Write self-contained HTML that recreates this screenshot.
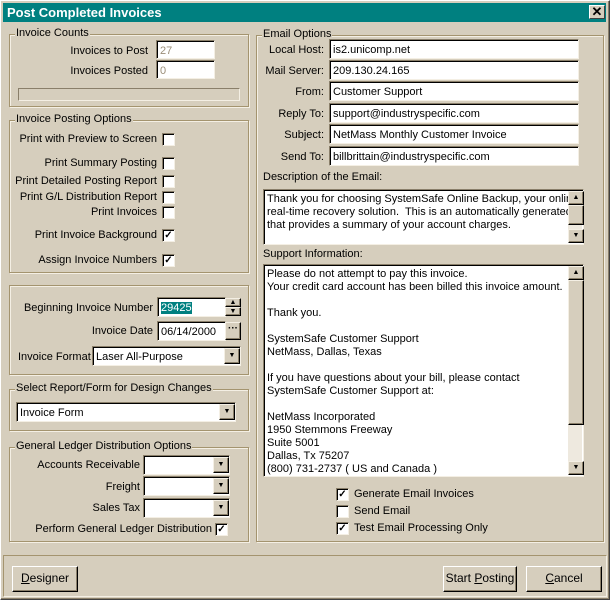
<!DOCTYPE html>
<html><head><style>
*{box-sizing:border-box;margin:0;padding:0}
body{width:610px;height:600px;background:#d6cebd;font-family:"Liberation Sans",sans-serif;font-size:11px;color:#000;position:relative;overflow:hidden}
.a{position:absolute;white-space:nowrap}
.win{position:absolute;left:0;top:0;width:610px;height:600px;border:1px solid #fff;border-right-color:#404040;border-bottom-color:#404040;box-shadow:inset -1px -1px 0 #8a7f6a}
.title{position:absolute;left:3px;top:3px;width:603px;height:19px;background:#008080;color:#fff;font-weight:bold;font-size:13px;padding:2px 4px}
.close{position:absolute;left:589px;top:5px;width:16px;height:14px;background:#d6cebd;border:1px solid;border-color:#fff #404040 #404040 #fff;font-size:13px;font-weight:bold;line-height:11px;text-align:center;color:#000}
.grp{position:absolute;border:1px solid #a4946f;box-shadow:inset 1px 1px 0 #f4efe4,1px 1px 0 #f4efe4}
.gl{position:absolute;background:#d6cebd;padding:0 1px;top:-8px;left:5px;white-space:nowrap}
.fld{position:absolute;background:#fff;border:1px solid;border-color:#8a7f6a #f4efe4 #f4efe4 #8a7f6a;box-shadow:inset 1px 1px 0 #000;padding:4px 0 0 3px;white-space:nowrap;overflow:hidden}
.r{text-align:right}
.cb{position:absolute;width:13px;height:13px;background:#fff;border:1px solid;border-color:#8a7f6a #f4efe4 #f4efe4 #8a7f6a;box-shadow:inset 1px 1px 0 #000;font-size:10px;line-height:11px;text-align:center;font-weight:bold}
.btn{position:absolute;background:#d6cebd;border:1px solid;border-color:#fff #000 #000 #fff;box-shadow:inset -1px -1px 0 #8a7f6a;text-align:center;font-size:12px}
.dd{position:absolute;width:16px;background:#d6cebd;border:1px solid;border-color:#f4efe4 #000 #000 #f4efe4;box-shadow:inset -1px -1px 0 #8a7f6a;font-size:7px;text-align:center}
.sb{position:absolute;width:14px;background:#eee9df}
</style></head><body>
<div class="win"></div>
<div class="title">Post Completed Invoices</div>
<div class="close">✕</div>

<div class="grp" style="left:9px;top:34px;width:240px;height:73px"><div class="gl">Invoice Counts</div></div>
<div class="a r" style="left:40px;top:45px;width:108px">Invoices to Post</div>
<div class="fld" style="left:156px;top:40px;width:59px;height:19px;color:#9a8e78">27</div>
<div class="a r" style="left:40px;top:65px;width:108px">Invoices Posted</div>
<div class="fld" style="left:156px;top:60px;width:59px;height:19px;color:#9a8e78">0</div>
<div class="a" style="left:18px;top:88px;width:222px;height:13px;border:1px solid;border-color:#8a7f6a #f4efe4 #f4efe4 #8a7f6a"></div>

<div class="grp" style="left:9px;top:120px;width:240px;height:153px"><div class="gl">Invoice Posting Options</div></div>
<div class="a r" style="left:10px;top:133px;width:147px">Print with Preview to Screen</div><div class="cb" style="left:162px;top:133px"></div>
<div class="a r" style="left:10px;top:157px;width:147px">Print Summary Posting</div><div class="cb" style="left:162px;top:157px"></div>
<div class="a r" style="left:10px;top:175px;width:147px">Print Detailed Posting Report</div><div class="cb" style="left:162px;top:175px"></div>
<div class="a r" style="left:10px;top:191px;width:147px">Print G/L Distribution Report</div><div class="cb" style="left:162px;top:191px"></div>
<div class="a r" style="left:10px;top:206px;width:147px">Print Invoices</div><div class="cb" style="left:162px;top:206px"></div>
<div class="a r" style="left:10px;top:229px;width:147px">Print Invoice Background</div><div class="cb" style="left:162px;top:229px">✓</div>
<div class="a r" style="left:10px;top:254px;width:147px">Assign Invoice Numbers</div><div class="cb" style="left:162px;top:254px">✓</div>

<div class="grp" style="left:9px;top:285px;width:240px;height:90px"></div>
<div class="a r" style="left:10px;top:302px;width:143px">Beginning Invoice Number</div>
<div class="fld" style="left:157px;top:297px;width:69px;height:20px"><span style="background:#008080;color:#fff">29425</span></div>
<div class="dd" style="left:225px;top:298px;height:9px;line-height:7px">▲</div>
<div class="dd" style="left:225px;top:307px;height:9px;line-height:7px">▼</div>
<div class="a r" style="left:10px;top:325px;width:143px">Invoice Date</div>
<div class="fld" style="left:157px;top:321px;width:69px;height:20px">06/14/2000</div>
<div class="dd" style="left:225px;top:322px;height:18px;font-size:10px;line-height:12px;font-weight:bold">···</div>
<div class="a" style="left:18px;top:351px">Invoice Format</div>
<div class="fld" style="left:92px;top:346px;width:149px;height:20px">Laser All-Purpose</div>
<div class="dd" style="left:224px;top:348px;height:16px;line-height:14px">▼</div>

<div class="grp" style="left:9px;top:389px;width:240px;height:42px"><div class="gl">Select Report/Form for Design Changes</div></div>
<div class="fld" style="left:16px;top:402px;width:220px;height:20px">Invoice Form</div>
<div class="dd" style="left:219px;top:404px;height:16px;line-height:14px">▼</div>

<div class="grp" style="left:9px;top:447px;width:240px;height:95px"><div class="gl">General Ledger Distribution Options</div></div>
<div class="a r" style="left:10px;top:459px;width:130px">Accounts Receivable</div>
<div class="fld" style="left:143px;top:455px;width:87px;height:20px"></div><div class="dd" style="left:213px;top:457px;height:16px;line-height:14px">▼</div>
<div class="a r" style="left:10px;top:481px;width:130px">Freight</div>
<div class="fld" style="left:143px;top:476px;width:87px;height:20px"></div><div class="dd" style="left:213px;top:478px;height:16px;line-height:14px">▼</div>
<div class="a r" style="left:10px;top:502px;width:130px">Sales Tax</div>
<div class="fld" style="left:143px;top:498px;width:87px;height:20px"></div><div class="dd" style="left:213px;top:500px;height:16px;line-height:14px">▼</div>
<div class="a r" style="left:10px;top:523px;width:202px">Perform General Ledger Distribution</div><div class="cb" style="left:215px;top:523px">✓</div>

<div class="grp" style="left:256px;top:35px;width:348px;height:507px"><div class="gl">Email Options</div></div>
<div class="a r" style="left:260px;top:44px;width:64px">Local Host:</div><div class="fld" style="left:329px;top:39px;width:250px;height:20px">is2.unicomp.net</div>
<div class="a r" style="left:260px;top:65px;width:64px">Mail Server:</div><div class="fld" style="left:329px;top:60px;width:250px;height:20px">209.130.24.165</div>
<div class="a r" style="left:260px;top:86px;width:64px">From:</div><div class="fld" style="left:329px;top:81px;width:250px;height:20px">Customer Support</div>
<div class="a r" style="left:260px;top:108px;width:64px">Reply To:</div><div class="fld" style="left:329px;top:103px;width:250px;height:20px">support@industryspecific.com</div>
<div class="a r" style="left:260px;top:129px;width:64px">Subject:</div><div class="fld" style="left:329px;top:124px;width:250px;height:20px">NetMass Monthly Customer Invoice</div>
<div class="a r" style="left:260px;top:151px;width:64px">Send To:</div><div class="fld" style="left:329px;top:146px;width:250px;height:20px">billbrittain@industryspecific.com</div>

<div class="a" style="left:263px;top:171px">Description of the Email:</div>
<div class="fld" style="left:263px;top:189px;width:321px;height:56px;line-height:13px;padding:3px 0 0 3px">Thank you for choosing SystemSafe Online Backup, your online<br>real-time recovery solution.&nbsp; This is an automatically generated er<br>that provides a summary of your account charges.</div>
<div class="sb" style="left:568px;top:191px;height:52px"></div>
<div class="dd" style="left:568px;top:191px;height:14px;line-height:12px">▲</div>
<div class="dd" style="left:568px;top:205px;height:20px"></div>
<div class="dd" style="left:568px;top:229px;height:14px;line-height:12px">▼</div>

<div class="a" style="left:263px;top:248px">Support Information:</div>
<div class="fld" style="left:263px;top:264px;width:321px;height:213px;line-height:13px;padding:3px 0 0 3px">Please do not attempt to pay this invoice.<br>Your credit card account has been billed this invoice amount.<br><br>Thank you.<br><br>SystemSafe Customer Support<br>NetMass, Dallas, Texas<br><br>If you have questions about your bill, please contact<br>SystemSafe Customer Support at:<br><br>NetMass Incorporated<br>1950 Stemmons Freeway<br>Suite 5001<br>Dallas, Tx 75207<br>(800) 731-2737 ( US and Canada )</div>
<div class="sb" style="left:568px;top:266px;height:209px"></div>
<div class="dd" style="left:568px;top:266px;height:14px;line-height:12px">▲</div>
<div class="dd" style="left:568px;top:280px;height:145px"></div>
<div class="dd" style="left:568px;top:461px;height:14px;line-height:12px">▼</div>

<div class="cb" style="left:336px;top:488px">✓</div><div class="a" style="left:354px;top:488px">Generate Email Invoices</div>
<div class="cb" style="left:336px;top:505px"></div><div class="a" style="left:354px;top:505px">Send Email</div>
<div class="cb" style="left:336px;top:522px">✓</div><div class="a" style="left:354px;top:522px">Test Email Processing Only</div>

<div class="a" style="left:3px;top:555px;width:604px;height:42px;border:1px solid;border-color:#a4946f #f4efe4 #f4efe4 #a4946f"></div>
<div class="btn" style="left:12px;top:566px;width:66px;height:26px;line-height:23px"><u>D</u>esigner</div>
<div class="btn" style="left:443px;top:566px;width:74px;height:26px;line-height:23px">Start <u>P</u>osting</div>
<div class="btn" style="left:526px;top:566px;width:76px;height:26px;line-height:23px"><u>C</u>ancel</div>
</body></html>
